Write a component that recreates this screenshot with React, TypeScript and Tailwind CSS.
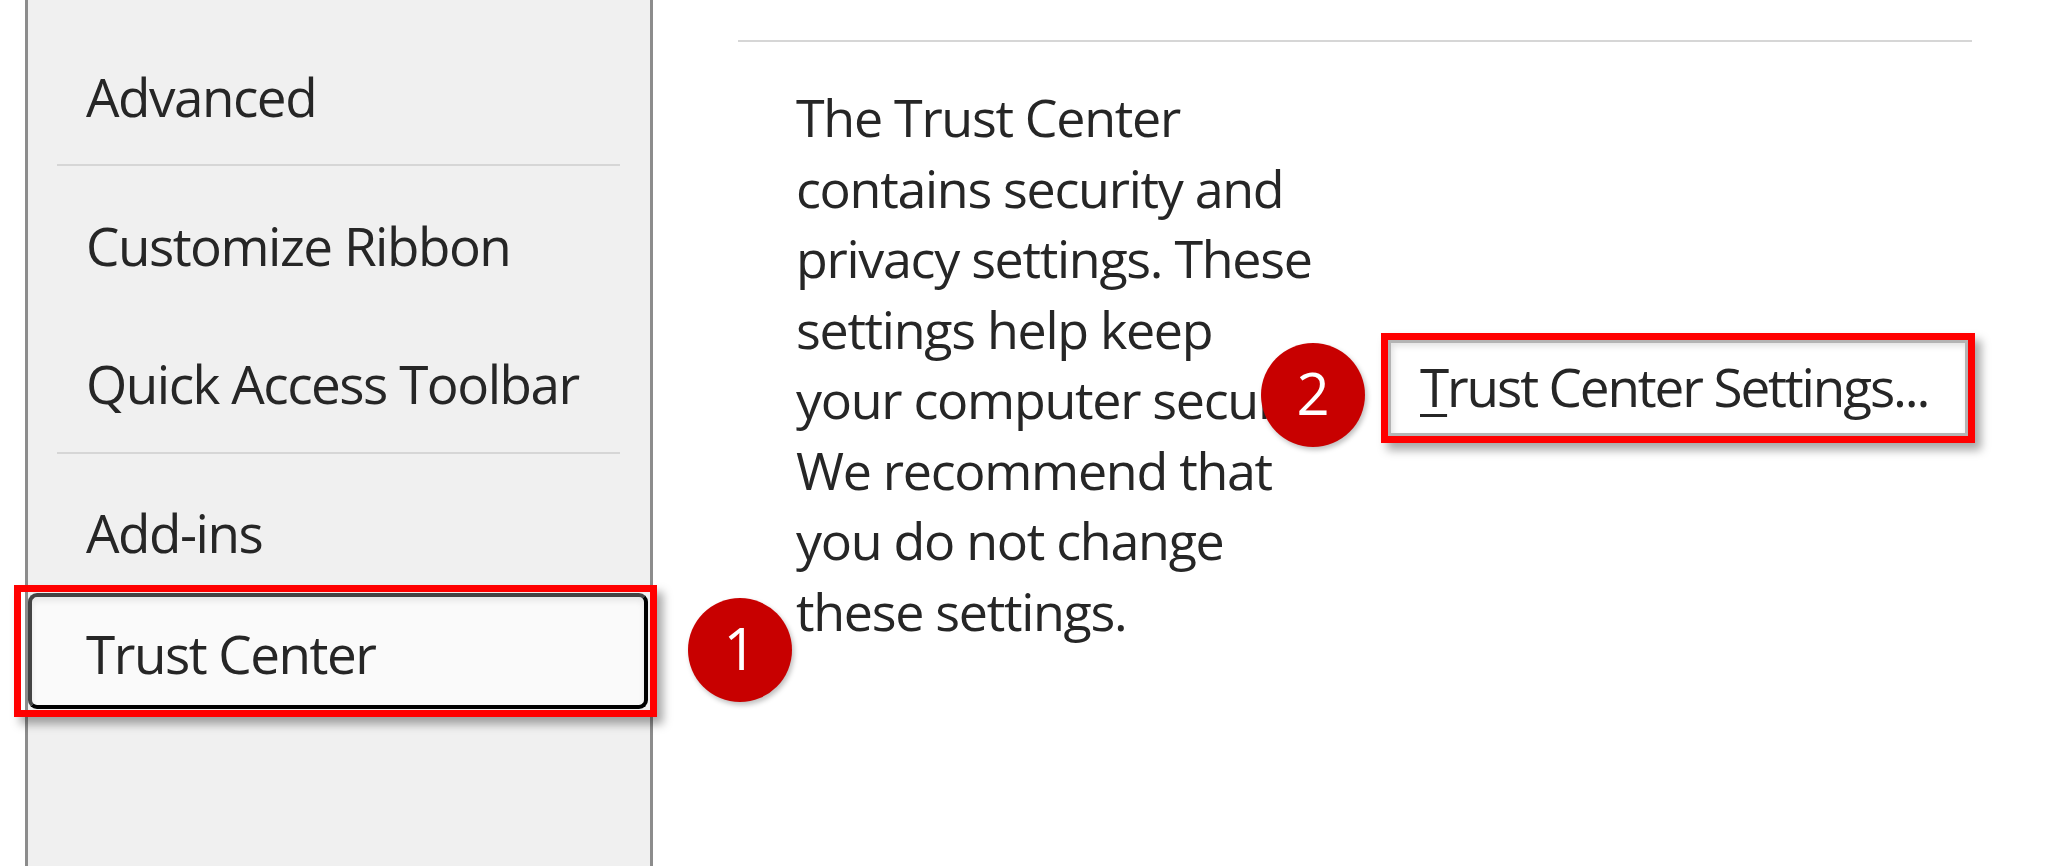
import React from 'react';

// Options dialog fragment: category list on the left, Trust Center pane on the right,
// with numbered callouts marking the two clicks.

const Divider: React.FC<{ className?: string }> = ({ className = '' }) => (
  <div className={`h-[2px] ml-[29px] mr-[30px] bg-[#d6d6d6] ${className}`} />
);

const NavItem: React.FC<{ label: string; className?: string }> = ({ label, className = '' }) => (
  <div className={`pl-[58px] text-[53px] leading-[53px] tracking-[-0.028em] text-[#262626] whitespace-nowrap ${className}`}>
    {label}
  </div>
);

const Callout: React.FC<{ n: number; className?: string }> = ({ n, className = '' }) => (
  <div
    className={`absolute w-[104px] h-[104px] rounded-full bg-[#c80000] text-white flex items-center justify-center text-[58px] leading-none shadow-[2px_3px_5px_rgba(0,0,0,0.25)] ${className}`}
  >
    <span className="-mt-[4px]">{n}</span>
  </div>
);

const App: React.FC = () => {
  return (
    <div className="relative w-[2048px] h-[866px] overflow-hidden bg-white flex font-['Open_Sans',sans-serif]">
      {/* left gutter */}
      <div className="w-[25px] shrink-0" />

      {/* category list */}
      <aside className="w-[628px] shrink-0 h-full border-x-[3px] border-[#8c8c8c] bg-[#f0f0f0]">
        <NavItem label="Advanced" className="mt-[70px]" />
        <Divider className="mt-[41px]" />
        <NavItem label="Customize Ribbon" className="mt-[53px]" />
        <NavItem label="Quick Access Toolbar" className="mt-[85px]" />
        <Divider className="mt-[42px]" />
        <NavItem label="Add-ins" className="mt-[52px]" />

        <div className="relative mt-[34px] mr-[2px]">
          <div className="h-[116px] rounded-[9px] border-[4px] border-t-[#444] border-l-[#444] border-b-black border-r-black bg-[#fafafa] shadow-[inset_0_4px_6px_rgba(0,0,0,0.08)] pl-[54px] pt-[30px] text-[53px] leading-[53px] tracking-[-0.028em] text-[#262626] whitespace-nowrap">
            Trust Center
          </div>
          <div className="absolute -left-[14px] -top-[8px] -right-[9px] -bottom-[8px] border-[7px] border-[#ff0000] shadow-[6px_7px_9px_rgba(0,0,0,0.35)]" />
        </div>
      </aside>

      {/* Trust Center pane */}
      <main className="flex-1 min-w-0">
        <div className="mt-[40px] ml-[85px] w-[1234px] h-[2px] bg-[#d6d6d6]" />

        <div className="flex ml-[143px] mt-[40px]">
          <p className="w-[530px] shrink-0 text-[52px] leading-[70.5px] tracking-[-0.025em] text-[#262626] whitespace-nowrap">
            The Trust Center
            <br />
            contains security and
            <br />
            privacy settings. These
            <br />
            settings help keep
            <br />
            your computer secure.
            <br />
            We recommend that
            <br />
            you do not change
            <br />
            these settings.
          </p>

          <div className="relative ml-[62px] mt-[258px] self-start">
            <button className="w-[580px] h-[96px] border-[3px] border-[#b4b4b4] bg-white shadow-[inset_2px_3px_6px_rgba(0,0,0,0.12)] text-left pl-[29px] pb-[4px] text-[53px] leading-[53px] tracking-[-0.04em] text-[#262626] whitespace-nowrap">
              <span className="underline decoration-[3px] underline-offset-[7px]">T</span>rust Center Settings...
            </button>
            <div className="absolute -inset-[7px] border-[7px] border-[#ff0000] shadow-[6px_7px_9px_rgba(0,0,0,0.35)]" />
          </div>
        </div>
      </main>

      <Callout n={1} className="left-[688px] top-[598px]" />
      <Callout n={2} className="left-[1261px] top-[343px]" />
    </div>
  );
};

export default App;
